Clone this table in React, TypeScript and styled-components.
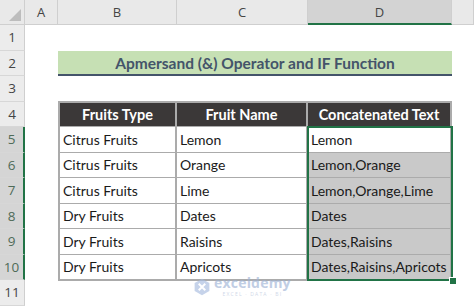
import React from "react";
import styled, { createGlobalStyle } from "styled-components";

const Global = createGlobalStyle`
  html, body { margin: 0; padding: 0; background: #ffffff; }
  body { width: 474px; height: 306px; overflow: hidden; font-family: Lato, "Open Sans", sans-serif; }
`;

const Sheet = styled.div`
  position: relative;
  display: grid;
  grid-template-columns: 25px 33px 119px 131px 144px 1fr;
  grid-template-rows: 25px repeat(11, 25.5px);
  width: 474px;
  height: 306px;
  overflow: hidden;
  background: #ffffff;
`;

const Corner = styled.div`
  position: relative;
  background: #e9e9e9;
  border-right: 1px solid #cfcfcf;
  border-bottom: 1px solid #cfcfcf;
  &::after {
    content: "";
    position: absolute;
    right: 3px;
    bottom: 3px;
    width: 0;
    height: 0;
    border-left: 12px solid transparent;
    border-bottom: 12px solid #bdbdbd;
  }
`;

const ColHead = styled.div<{ $sel?: boolean }>`
  display: flex;
  align-items: center;
  justify-content: center;
  background: ${(p) => (p.$sel ? "#d3d3d3" : "#e9e9e9")};
  border-right: 1px solid #cfcfcf;
  border-bottom: ${(p) => (p.$sel ? "2px solid #217346" : "1px solid #cfcfcf")};
  color: #454545;
  font-family: "Open Sans", sans-serif;
  font-size: 13px;
  box-sizing: border-box;
`;

const RowHead = styled.div<{ $sel?: boolean }>`
  display: flex;
  align-items: center;
  justify-content: center;
  background: ${(p) => (p.$sel ? "#d5d5d5" : "#ececec")};
  border-right: ${(p) => (p.$sel ? "2px solid #217346" : "1px solid #cfcfcf")};
  border-bottom: 1px solid #d7d7d7;
  color: ${(p) => (p.$sel ? "#4f6b58" : "#454545")};
  font-family: "Open Sans", sans-serif;
  font-size: 13.5px;
  box-sizing: border-box;
`;

const Blank = styled.div``;

const Title = styled.div`
  grid-column: 3 / 6;
  display: flex;
  align-items: center;
  justify-content: center;
  background: #c6e0b4;
  border-bottom: 2px solid #44546a;
  color: #44546a;
  font-weight: 700;
  font-size: 15.5px;
  box-sizing: border-box;
  padding-top: 1px;
`;

const Cell = styled.div<{ $head?: boolean; $first?: boolean; $top?: boolean; $fill?: boolean }>`
  display: flex;
  align-items: center;
  justify-content: ${(p) => (p.$head ? "center" : "flex-start")};
  padding-left: ${(p) => (p.$head ? "0" : "3px")};
  box-sizing: border-box;
  background: ${(p) => (p.$head ? "#3b3838" : p.$fill ? "#c9c9c9" : "#ffffff")};
  color: ${(p) => (p.$head ? "#ffffff" : "#1a1a1a")};
  font-weight: ${(p) => (p.$head ? 700 : 400)};
  font-size: ${(p) => (p.$head ? "14.5px" : "14px")};
  white-space: nowrap;
  border-right: 2px solid #ababab;
  border-bottom: 2px solid #ababab;
  border-left: ${(p) => (p.$first ? "2px solid #ababab" : "none")};
  border-top: ${(p) => (p.$top ? "2px solid #ababab" : "none")};
  margin-top: ${(p) => (p.$top ? "-1px" : "0")};
  margin-bottom: -1px;
`;

const Selection = styled.div`
  position: absolute;
  left: 307px;
  top: 126px;
  width: 146px;
  height: 155px;
  border: 2px solid #217346;
  box-sizing: border-box;
  pointer-events: none;
`;

const FillHandle = styled.div`
  position: absolute;
  left: 449px;
  top: 277px;
  width: 6px;
  height: 6px;
  background: #217346;
  border: 1px solid #ffffff;
`;

const Watermark = styled.div`
  position: absolute;
  left: 193px;
  top: 276px;
  display: flex;
  align-items: center;
  gap: 3px;
  opacity: 0.65;
  pointer-events: none;
`;

const MarkText = styled.div`
  display: flex;
  flex-direction: column;
  align-items: center;
`;

const MarkName = styled.span`
  color: #9fb4d6;
  font-family: "Open Sans", sans-serif;
  font-weight: 700;
  font-size: 14px;
  line-height: 14px;
  letter-spacing: 0.2px;
`;

const MarkSub = styled.span`
  color: #b8c6dd;
  font-family: "Open Sans", sans-serif;
  font-size: 5px;
  line-height: 5px;
  letter-spacing: 1.2px;
  margin-top: 2px;
`;

const rows: [string, string, string][] = [
  ["Citrus Fruits", "Lemon", "Lemon"],
  ["Citrus Fruits", "Orange", "Lemon,Orange"],
  ["Citrus Fruits", "Lime", "Lemon,Orange,Lime"],
  ["Dry Fruits", "Dates", "Dates"],
  ["Dry Fruits", "Raisins", "Dates,Raisins"],
  ["Dry Fruits", "Apricots", "Dates,Raisins,Apricots"],
];

export default function App() {
  return (
    <>
      <Global />
      <Sheet>
        <Corner />
        <ColHead>A</ColHead>
        <ColHead>B</ColHead>
        <ColHead>C</ColHead>
        <ColHead $sel>D</ColHead>
        <ColHead />

        <RowHead>1</RowHead>
        <Blank /><Blank /><Blank /><Blank /><Blank />

        <RowHead>2</RowHead>
        <Blank />
        <Title>Apmersand (&amp;) Operator and IF Function</Title>
        <Blank />

        <RowHead>3</RowHead>
        <Blank /><Blank /><Blank /><Blank /><Blank />

        <RowHead>4</RowHead>
        <Blank />
        <Cell $head $first $top>Fruits Type</Cell>
        <Cell $head $top>Fruit Name</Cell>
        <Cell $head $top>Concatenated Text</Cell>
        <Blank />

        {rows.map((r, i) => (
          <React.Fragment key={i}>
            <RowHead $sel>{i + 5}</RowHead>
            <Blank />
            <Cell $first>{r[0]}</Cell>
            <Cell>{r[1]}</Cell>
            <Cell $fill={i > 0}>{r[2]}</Cell>
            <Blank />
          </React.Fragment>
        ))}

        <RowHead>11</RowHead>
        <Blank /><Blank /><Blank /><Blank /><Blank />

        <Selection />
        <FillHandle />
        <Watermark>
          <svg width="18" height="18" viewBox="0 0 22 22">
            <path d="M11 1 L20 6 L20 16 L11 21 L2 16 L2 6 Z" fill="#a9bde0" />
            <path d="M7 7 L15 15 M15 7 L7 15" stroke="#ffffff" strokeWidth="2.4" />
          </svg>
          <MarkText>
            <MarkName>exceldemy</MarkName>
            <MarkSub>EXCEL · DATA · BI</MarkSub>
          </MarkText>
        </Watermark>
      </Sheet>
    </>
  );
}
